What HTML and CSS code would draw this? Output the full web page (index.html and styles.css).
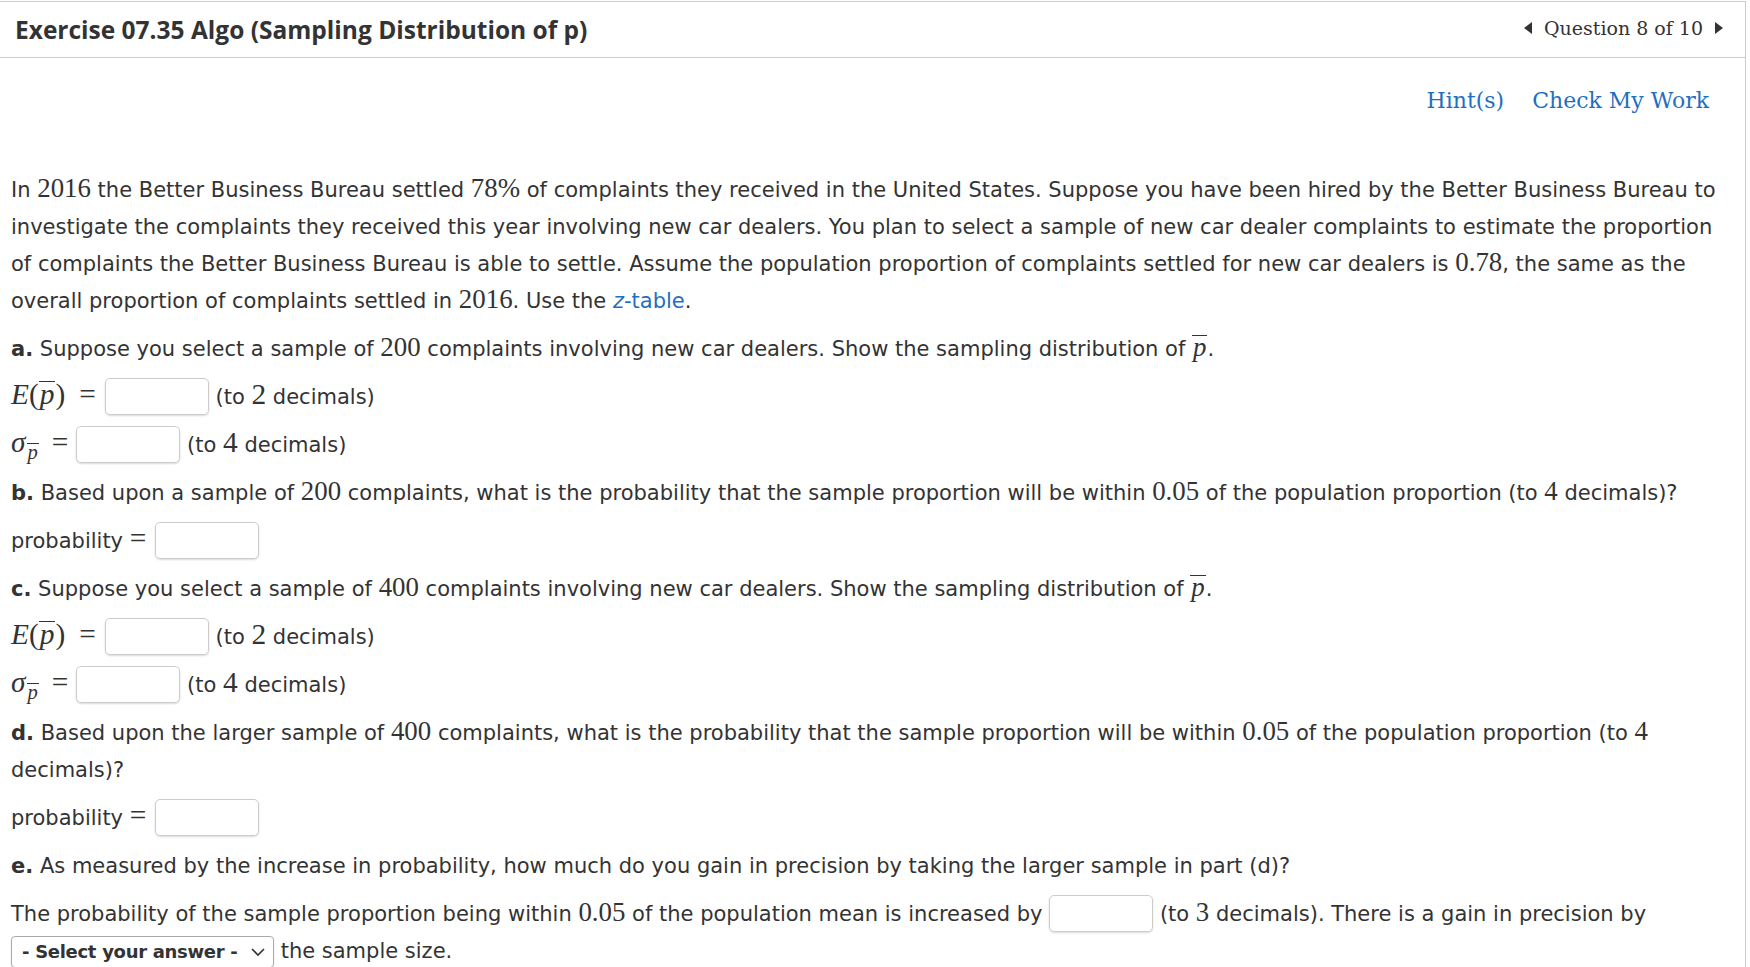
FILE: index.html
```html
<!DOCTYPE html>
<html>
<head>
<meta charset="utf-8">
<link rel="stylesheet" href="styles.css">
</head>
<body>
<div class="panel">
  <header class="head">
    <h1 class="title">Exercise 07.35 Algo (Sampling Distribution of p)</h1>
    <nav class="qnav">
      <span class="tri tri-left"></span>
      <span class="qtext">Question 8 of 10</span>
      <span class="tri tri-right"></span>
    </nav>
  </header>
  <div class="tools">
    <a class="tool">Hint(s)</a>
    <a class="tool">Check My Work</a>
  </div>
  <div class="content">
    <p class="intro">In <span class="m">2016</span> the Better Business Bureau settled <span class="m">78%</span> of complaints they received in the United States. Suppose you have been hired by the Better Business Bureau to investigate the complaints they received this year involving new car dealers. You plan to select a sample of new car dealer complaints to estimate the proportion of complaints the Better Business Bureau is able to settle. Assume the population proportion of complaints settled for new car dealers is <span class="m">0.78</span>, the same as the overall proportion of complaints settled in <span class="m">2016</span>. Use the <a class="link"><i>z</i>-table</a>.</p>

    <p><b>a.</b> Suppose you select a sample of <span class="m">200</span> complaints involving new car dealers. Show the sampling distribution of <span class="m"><span class="bar mi">p</span></span>.</p>
    <p class="row"><span class="m"><span class="mi">E</span>(<span class="bar mi">p</span>)<span class="eq">=</span></span><span class="inp"></span> (to <span class="m">2</span> decimals)</p>
    <p class="row"><span class="m"><span class="mi">σ</span><sub class="sub"><span class="bar mi">p</span></sub><span class="eq eq-s">=</span></span><span class="inp"></span> (to <span class="m">4</span> decimals)</p>

    <p><b>b.</b> Based upon a sample of <span class="m">200</span> complaints, what is the probability that the sample proportion will be within <span class="m">0.05</span> of the population proportion (to <span class="m">4</span> decimals)?</p>
    <p class="row">probability <span class="m"><span class="eq eq-l">=</span></span><span class="inp"></span></p>

    <p><b>c.</b> Suppose you select a sample of <span class="m">400</span> complaints involving new car dealers. Show the sampling distribution of <span class="m"><span class="bar mi">p</span></span>.</p>
    <p class="row"><span class="m"><span class="mi">E</span>(<span class="bar mi">p</span>)<span class="eq">=</span></span><span class="inp"></span> (to <span class="m">2</span> decimals)</p>
    <p class="row"><span class="m"><span class="mi">σ</span><sub class="sub"><span class="bar mi">p</span></sub><span class="eq eq-s">=</span></span><span class="inp"></span> (to <span class="m">4</span> decimals)</p>

    <p><b>d.</b> Based upon the larger sample of <span class="m">400</span> complaints, what is the probability that the sample proportion will be within <span class="m">0.05</span> of the population proportion (to <span class="m">4</span> decimals)?</p>
    <p class="row">probability <span class="m"><span class="eq eq-l">=</span></span><span class="inp"></span></p>

    <p><b>e.</b> As measured by the increase in probability, how much do you gain in precision by taking the larger sample in part (d)?</p>
    <p>The probability of the sample proportion being within <span class="m">0.05</span> of the population mean is increased by <span class="inp"></span> (to <span class="m">3</span> decimals). There is a gain in precision by <span class="sel"><span class="seltext">- Select your answer -</span><svg class="chev" width="14" height="9" viewBox="0 0 14 9"><path d="M1 1 L7 7 L13 1" fill="none" stroke="#333" stroke-width="1.6"/></svg></span> the sample size.</p>
  </div>
</div>
</body>
</html>
```

FILE: styles.css
```css
html, body {
  margin: 0;
  padding: 0;
  background: #fff;
}
body {
  font-family: "DejaVu Sans", Verdana, sans-serif;
  color: #333;
}
.panel {
  width: 1746px;
  min-height: 967px;
  border-top: 1px solid #ccc;
  border-right: 1px solid #ccc;
  margin-top: 1px;
  box-sizing: border-box;
}
.head {
  display: flex;
  align-items: center;
  justify-content: space-between;
  height: 55px;
  border-bottom: 1px solid #ccc;
  padding: 0 22px 0 15px;
}
.title {
  margin: 0;
  font-family: "Open Sans", sans-serif;
  font-weight: 700;
  font-size: 24.5px;
  color: #333;
}
.qnav {
  display: flex;
  align-items: center;
  gap: 12px;
  font-family: "DejaVu Serif", Georgia, serif;
  font-size: 19px;
  color: #333;
  margin-top: -4px;
}
.tri {
  width: 0;
  height: 0;
  border-top: 6px solid transparent;
  border-bottom: 6px solid transparent;
}
.tri-left { border-right: 8px solid #333; }
.tri-right { border-left: 8px solid #333; }
.tools {
  display: flex;
  justify-content: flex-end;
  gap: 28px;
  padding: 30px 36px 0 0;
  height: 89px;
  box-sizing: border-box;
}
.tool {
  font-family: "DejaVu Serif", Georgia, serif;
  font-size: 22px;
  color: #1f6fc1;
  cursor: pointer;
}
.content {
  padding: 25px 11px 0 11px;
  font-size: 21px;
  line-height: 37px;
}
.content p {
  margin: 0 0 11px;
}
.content b {
  font-weight: bold;
}
.m {
  font-family: "Liberation Serif", "Times New Roman", serif;
  font-size: 1.28em;
  line-height: 1;
}
.row .m {
  font-size: 1.4em;
}
.mi {
  font-style: italic;
}
.bar {
  display: inline-block;
  border-top: 1.5px solid #333;
  line-height: 0.85;
  padding: 0 1px;
}
.sub {
  font-size: 0.7em;
  vertical-align: -0.35em;
  line-height: 0;
  margin-left: 1px;
}
.eq {
  margin: 0 9px 0 14px;
}
.eq-s {
  margin-left: 13px;
  margin-right: 8px;
}
.eq-l {
  margin: 0 9px 0 0;
}
.link {
  color: #1f6fc1;
}
.inp {
  display: inline-block;
  width: 104px;
  height: 37px;
  border: 1px solid #ccc;
  border-radius: 5px;
  box-shadow: 0 1px 2px rgba(0,0,0,0.15);
  vertical-align: middle;
  box-sizing: border-box;
  margin-top: -4px;
}
.sel {
  display: inline-flex;
  align-items: center;
  justify-content: space-between;
  width: 263px;
  height: 32px;
  box-sizing: border-box;
  border: 1px solid #aaa;
  border-radius: 4px;
  box-shadow: 0 1px 2px rgba(0,0,0,0.12);
  padding: 0 8px 0 10px;
  vertical-align: middle;
  white-space: nowrap;
  line-height: 1;
}
.seltext {
  font-weight: bold;
  font-size: 18px;
  letter-spacing: -0.3px;
}
.chev {
  margin-left: 6px;
}
```
